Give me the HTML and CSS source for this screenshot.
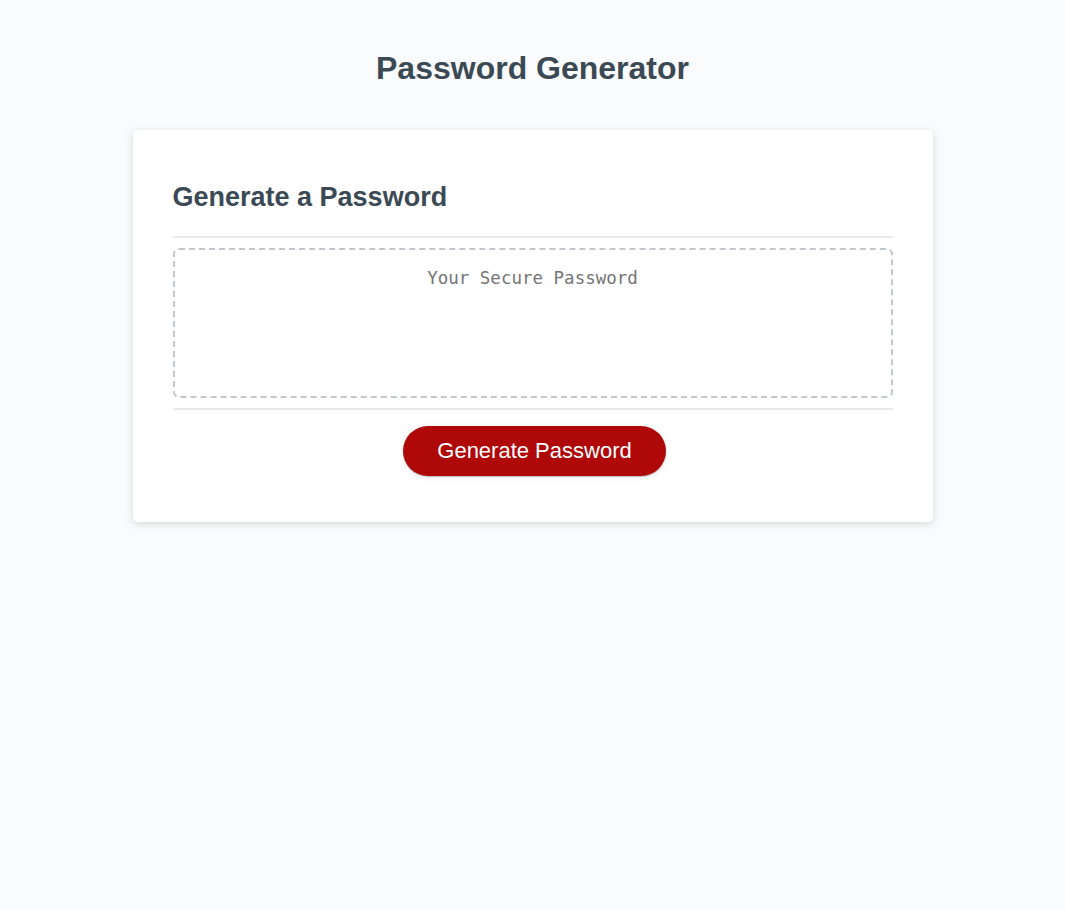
FILE: index.html
```html
<!DOCTYPE html>
<html lang="en">
<head>
<meta charset="UTF-8">
<title>Password Generator</title>
<link rel="stylesheet" href="styles.css">
</head>
<body>
<div class="wrapper">
  <header>
    <h1>Password Generator</h1>
  </header>
  <div class="card">
    <div class="card-header">
      <h2>Generate a Password</h2>
    </div>
    <div class="card-body">
      <textarea readonly id="password" placeholder="Your Secure Password" aria-label="Generated Password"></textarea>
    </div>
    <div class="card-footer">
      <button id="generate" class="btn">Generate Password</button>
    </div>
  </div>
</div>
</body>
</html>
```

FILE: styles.css
```css
*, *::before, *::after { box-sizing: border-box; }

html, body { height: 100%; }

body {
  margin: 0;
  font-family: "Liberation Sans", Arial, sans-serif;
  background-color: #f9fbfd;
}

.wrapper {
  padding: 38px 20px 0;
}

header {
  text-align: center;
  padding: 0 20px 20px;
  color: hsl(206, 17%, 28%);
}

header h1 {
  margin: 12px 0 0;
  font-size: 32px;
  line-height: 37px;
}

.card {
  background-color: #fff;
  border-radius: 5px;
  box-shadow: rgba(0, 0, 0, 0.15) 0 2px 8px 0;
  color: hsl(206, 17%, 28%);
  font-size: 18px;
  margin: 23px auto 0;
  max-width: 800px;
  padding: 30px 40px;
}

.card-header h2 {
  margin: 0;
  padding: 22px 0 23px;
  font-size: 27px;
  line-height: 31px;
}

.card-header::after,
.card-footer::before {
  content: "";
  display: block;
  width: 100%;
  height: 2px;
  background: #e7e9eb;
}

.card-body { min-height: 100px; }

#password {
  display: block;
  width: 100%;
  height: 150px;
  margin: 10px 0;
  padding: 18px 15px 80px;
  border: 2px dashed #c0c7cf;
  border-radius: 6px;
  font-family: "DejaVu Sans Mono", "Liberation Mono", monospace;
  font-size: 17.5px;
  text-align: center;
  resize: none;
  overflow: hidden;
  outline: none;
  background: #fff;
}

#password::placeholder { color: #757575; }

.card-footer { text-align: center; }

.btn {
  border: none;
  background-color: hsl(360, 91%, 36%);
  border-radius: 25px;
  box-shadow: rgba(0, 0, 0, 0.1) 0 1px 6px 0, rgba(0, 0, 0, 0.2) 0 1px 1px 0;
  color: #fff;
  display: inline-block;
  font-family: "Liberation Sans", Arial, sans-serif;
  font-size: 22px;
  line-height: 22px;
  margin: 16px 16px 16px 20px;
  padding: 14px 34px;
  cursor: pointer;
}
```
